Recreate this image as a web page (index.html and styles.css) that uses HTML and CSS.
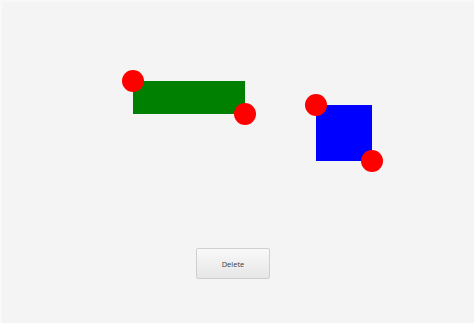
FILE: index.html
```html
<!DOCTYPE html>
<html>
<head>
<meta charset="utf-8">
<link rel="stylesheet" href="styles.css">
</head>
<body>
<div class="page">
  <div class="stage">
    <div class="shape rect-green"></div>
    <div class="handle h1"></div>
    <div class="handle h2"></div>
    <div class="shape rect-blue"></div>
    <div class="handle h3"></div>
    <div class="handle h4"></div>
  </div>
  <div class="toolbar">
    <button class="btn">Delete</button>
  </div>
</div>
</body>
</html>
```

FILE: styles.css
```css
html, body {
  margin: 0;
  padding: 0;
  background: #f4f4f4;
}
.page {
  width: 474px;
  height: 323px;
  background: #f4f4f4;
  box-shadow: inset 2px 2px 0 #f8f8f8;
  display: flex;
  flex-direction: column;
}
.stage {
  position: relative;
  height: 248px;
}
.shape {
  position: absolute;
}
.rect-green {
  left: 133px;
  top: 81px;
  width: 112px;
  height: 33px;
  background: #008000;
}
.rect-blue {
  left: 316px;
  top: 105px;
  width: 56px;
  height: 56px;
  background: #0000ff;
}
.handle {
  position: absolute;
  width: 22px;
  height: 22px;
  margin: -11px 0 0 -11px;
  border-radius: 50%;
  background: #ff0000;
}
.h1 { left: 133px; top: 81px; }
.h2 { left: 245px; top: 114px; }
.h3 { left: 316px; top: 105px; }
.h4 { left: 372px; top: 161px; }
.toolbar {
  display: flex;
  padding-left: 196px;
}
.btn {
  width: 74px;
  height: 31px;
  margin: 0;
  padding: 0;
  border: 1px solid #cfcfcf;
  border-radius: 2px;
  background: linear-gradient(#f9f9f9, #e6e6e6);
  font-family: "Open Sans", "Liberation Sans", sans-serif;
  font-size: 7.5px;
  color: #3a3a3a;
}
```
